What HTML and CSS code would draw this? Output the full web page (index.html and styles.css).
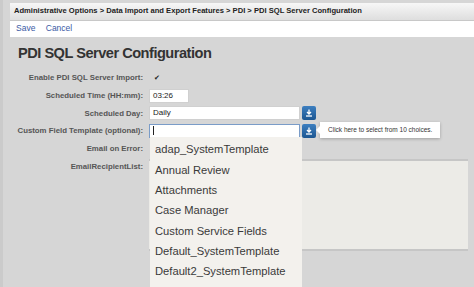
FILE: index.html
```html
<!DOCTYPE html>
<html lang="en">
<head>
  <meta charset="UTF-8">
  <title>PDI SQL Server Configuration</title>
  <link rel="stylesheet" href="styles.css">
</head>
<body>
  <div class="page">
    <div class="breadcrumb">Administrative Options &gt; Data Import and Export Features &gt; PDI &gt; PDI SQL Server Configuration</div>
    <div class="toolbar">
      <a href="#">Save</a>
      <a href="#">Cancel</a>
    </div>

    <h1>PDI SQL Server Configuration</h1>

    <div class="form">
      <label>Enable PDI SQL Server Import:</label>
      <div class="field"><span class="check">&#10004;</span></div>

      <label>Scheduled Time (HH:mm):</label>
      <div class="field"><span class="input time">03:26</span></div>

      <label>Scheduled Day:</label>
      <div class="field">
        <span class="input combo">Daily</span>
        <span class="pick"><svg width="8" height="8" viewBox="0 0 8 8"><path d="M4 0.5v4.5M2 3l2 2 2-2" stroke="#fff" stroke-width="1.3" fill="none"/><path d="M1 7h6" stroke="#fff" stroke-width="1.3"/></svg></span>
      </div>

      <label>Custom Field Template (optional):</label>
      <div class="field">
        <span class="input combo active"><span class="caret"></span></span>
        <span class="pick"><svg width="8" height="8" viewBox="0 0 8 8"><path d="M4 0.5v4.5M2 3l2 2 2-2" stroke="#fff" stroke-width="1.3" fill="none"/><path d="M1 7h6" stroke="#fff" stroke-width="1.3"/></svg></span>
        <div class="tip">Click here to select from 10 choices.</div>
        <ul class="choices">
          <li>adap_SystemTemplate</li>
          <li>Annual Review</li>
          <li>Attachments</li>
          <li>Case Manager</li>
          <li>Custom Service Fields</li>
          <li>Default_SystemTemplate</li>
          <li>Default2_SystemTemplate</li>
        </ul>
      </div>

      <label>Email on Error:</label>
      <div class="field"></div>

      <label>EmailRecipientList:</label>
      <div class="field"><div class="recipients"></div></div>
    </div>
  </div>
</body>
</html>
```

FILE: styles.css
```css
body {
  margin: 0;
  font-family: "Liberation Sans", Arial, sans-serif;
  background-color: #d6d6d6;
  color: #333;
  overflow: hidden;
}

.page {
  height: 287px;
  border-left: 3px solid #cbcbcb;
  padding-top: 3px;
}

.breadcrumb {
  margin-left: 7px;
  height: 17px;
  line-height: 16px;
  padding-left: 4px;
  font-size: 7.6px;
  font-weight: bold;
  color: #222;
  background-image: linear-gradient(#f7f7f7, #dedede);
  border-bottom: 1px solid #c8c8c8;
  white-space: nowrap;
}

.toolbar {
  margin-left: 7px;
  height: 16px;
  line-height: 15px;
  padding-left: 6px;
  background-color: #fff;
  font-size: 8.5px;
}

.toolbar a {
  color: #3b5ba5;
  text-decoration: none;
  margin-right: 8px;
}

h1 {
  margin: 5px 0 5px 15px;
  font-size: 14.6px;
  letter-spacing: -0.5px;
  line-height: 22px;
  color: #333;
}

.form {
  display: grid;
  grid-template-columns: 140px 1fr;
  grid-auto-rows: 17.8px;
  column-gap: 6px;
  font-size: 7.8px;
}

.form label {
  text-align: right;
  font-weight: bold;
  color: #555;
  line-height: 17.8px;
  white-space: nowrap;
}

.field {
  position: relative;
  display: flex;
  align-items: center;
  gap: 2px;
}

.check {
  font-size: 7px;
  color: #222;
  margin-left: 5px;
}

.input {
  box-sizing: border-box;
  height: 14px;
  line-height: 12px;
  padding-left: 3px;
  background: #fff;
  border: 1px solid #d0d0d0;
  font-size: 8px;
  color: #222;
}

.time {
  width: 40px;
}

.combo {
  width: 151px;
}

.active {
  border-color: #7a9cc8;
}

.caret {
  display: inline-block;
  width: 1px;
  height: 9px;
  margin-top: 1px;
  background: #222;
}

.pick {
  display: flex;
  align-items: center;
  justify-content: center;
  width: 14px;
  height: 14px;
  border-radius: 2px;
  background-image: linear-gradient(#3d7fc0, #1d5792);
}

.tip {
  position: absolute;
  left: 171px;
  top: 0;
  width: 112px;
  height: 16px;
  line-height: 16px;
  padding-left: 8px;
  background: #fff;
  font-size: 6.5px;
  color: #333;
  white-space: nowrap;
  box-shadow: 0 1px 3px rgba(0, 0, 0, 0.25);
}

.tip::before {
  content: "";
  position: absolute;
  left: -4px;
  top: 4px;
  border-top: 4px solid transparent;
  border-bottom: 4px solid transparent;
  border-right: 4px solid #fff;
}

.choices {
  position: absolute;
  z-index: 2;
  left: 1px;
  top: 15px;
  width: 152px;
  height: 160px;
  margin: 0;
  padding: 2px 0 0;
  list-style: none;
  background: #f3f1ed;
  font-size: 11.2px;
  color: #3a3a3a;
}

.choices li {
  height: 20.3px;
  line-height: 20.3px;
  padding-left: 5px;
}

.recipients {
  position: absolute;
  top: 1px;
  left: 0;
  width: 319px;
  height: 92px;
  background: #ecebe7;
  border-top: 2px solid #c6c6c6;
  border-bottom: 2px solid #c6c6c6;
  box-sizing: border-box;
}
```
